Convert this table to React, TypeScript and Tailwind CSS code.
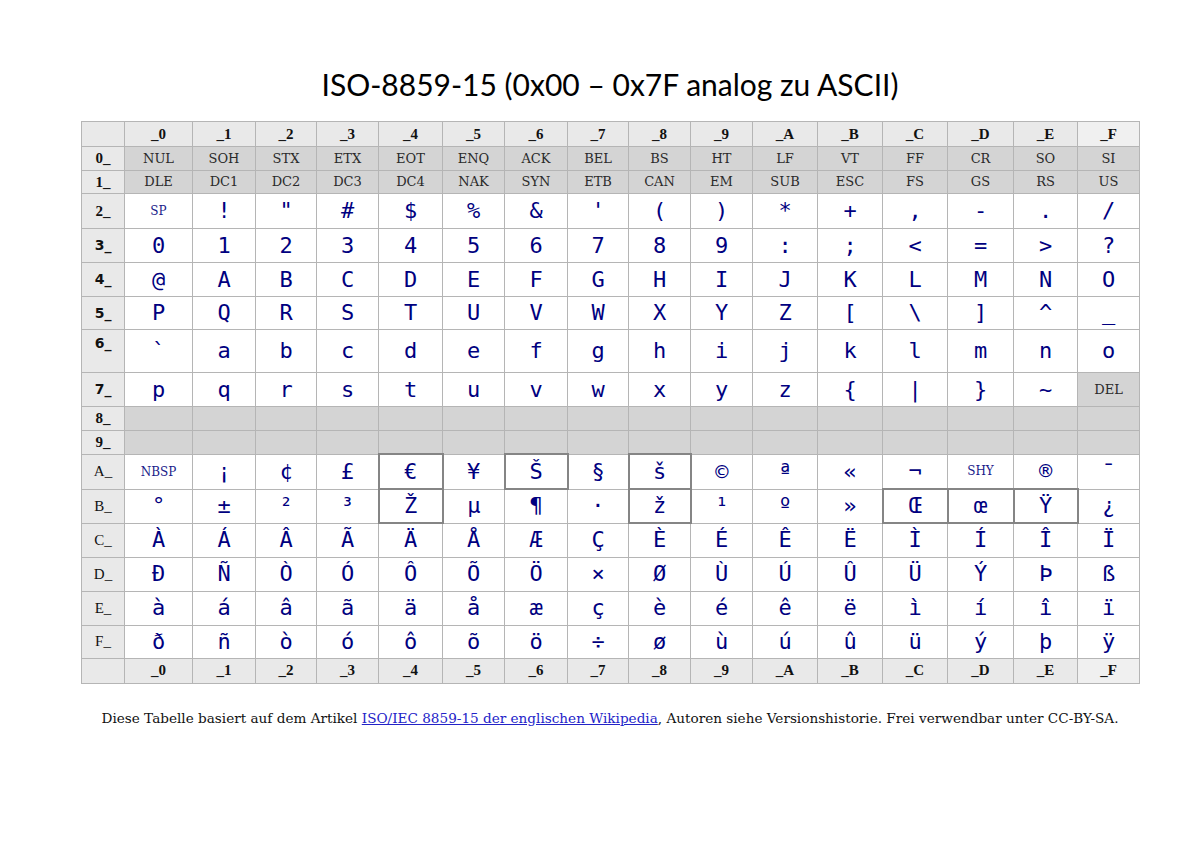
import React from "react";

const CTRL0 = ["NUL","SOH","STX","ETX","EOT","ENQ","ACK","BEL","BS","HT","LF","VT","FF","CR","SO","SI"];
const CTRL1 = ["DLE","DC1","DC2","DC3","DC4","NAK","SYN","ETB","CAN","EM","SUB","ESC","FS","GS","RS","US"];
const R2 = ["SP","!","\"","#","$","%","&","'","(",")","*","+",",","-",".","/"];
const R3 = ["0","1","2","3","4","5","6","7","8","9",":",";","<","=",">","?"];
const R4 = ["@","A","B","C","D","E","F","G","H","I","J","K","L","M","N","O"];
const R5 = ["P","Q","R","S","T","U","V","W","X","Y","Z","[","\\","]","^","_"];
const R6 = ["`","a","b","c","d","e","f","g","h","i","j","k","l","m","n","o"];
const R7 = ["p","q","r","s","t","u","v","w","x","y","z","{","|","}","~","DEL"];
const RA = ["NBSP","¡","¢","£","€","¥","Š","§","š","©","ª","«","¬","SHY","®","¯"];
const RB = ["°","±","²","³","Ž","µ","¶","·","ž","¹","º","»","Œ","œ","Ÿ","¿"];
const RC = ["À","Á","Â","Ã","Ä","Å","Æ","Ç","È","É","Ê","Ë","Ì","Í","Î","Ï"];
const RD = ["Ð","Ñ","Ò","Ó","Ô","Õ","Ö","×","Ø","Ù","Ú","Û","Ü","Ý","Þ","ß"];
const RE = ["à","á","â","ã","ä","å","æ","ç","è","é","ê","ë","ì","í","î","ï"];
const RF = ["ð","ñ","ò","ó","ô","õ","ö","÷","ø","ù","ú","û","ü","ý","þ","ÿ"];

const HEX = ["0","1","2","3","4","5","6","7","8","9","A","B","C","D","E","F"];

const THICK = new Set(["A4","A6","A8","B4","B8","BC","BD","BE"]);
const NAMES = new Set(["SP","NBSP","SHY"]);

const colClasses = [
  "w-[43px]","w-[68px]","w-[63px]","w-[61px]","w-[62px]","w-[64px]","w-[62px]","w-[63px]",
  "w-[61px]","w-[62px]","w-[62px]","w-[65px]","w-[65px]","w-[65px]","w-[66px]","w-[64px]","w-[62px]",
];

type RowDef = {
  label: string;
  h: string;
  kind: "ctrl" | "chars" | "empty";
  cells?: string[];
  labelStyle: "bold" | "sans" | "reg";
  top?: boolean;
};

const rows: RowDef[] = [
  { label: "0", h: "h-[22px]", kind: "ctrl", cells: CTRL0, labelStyle: "bold" },
  { label: "1", h: "h-[23px]", kind: "ctrl", cells: CTRL1, labelStyle: "bold" },
  { label: "2", h: "h-[35px]", kind: "chars", cells: R2, labelStyle: "bold" },
  { label: "3", h: "h-[34px]", kind: "chars", cells: R3, labelStyle: "sans" },
  { label: "4", h: "h-[34px]", kind: "chars", cells: R4, labelStyle: "sans" },
  { label: "5", h: "h-[33px]", kind: "chars", cells: R5, labelStyle: "sans" },
  { label: "6", h: "h-[43px]", kind: "chars", cells: R6, labelStyle: "sans", top: true },
  { label: "7", h: "h-[34px]", kind: "chars", cells: R7, labelStyle: "sans" },
  { label: "8", h: "h-[23px]", kind: "empty", labelStyle: "bold" },
  { label: "9", h: "h-[24px]", kind: "empty", labelStyle: "bold" },
  { label: "A", h: "h-[35px]", kind: "chars", cells: RA, labelStyle: "reg" },
  { label: "B", h: "h-[34px]", kind: "chars", cells: RB, labelStyle: "reg" },
  { label: "C", h: "h-[34px]", kind: "chars", cells: RC, labelStyle: "reg" },
  { label: "D", h: "h-[34px]", kind: "chars", cells: RD, labelStyle: "reg" },
  { label: "E", h: "h-[34px]", kind: "chars", cells: RE, labelStyle: "reg" },
  { label: "F", h: "h-[33px]", kind: "chars", cells: RF, labelStyle: "reg" },
];

const BORDER = "border border-[#b5b5b5]";
const HEAD_BG = "bg-[#e9e9e9]";
const CTRL_BG = "bg-[#d4d4d4]";

function labelClass(s: RowDef["labelStyle"]) {
  if (s === "bold") return "font-['Liberation_Serif',serif] font-bold text-[15px] text-[#111]";
  if (s === "sans") return "font-['DejaVu_Sans',sans-serif] font-semibold text-[14px] text-[#111]";
  return "font-['Liberation_Serif',serif] text-[15px] text-[#111]";
}

function HeaderRow() {
  return (
    <tr className="h-[25px]">
      <td className={`${BORDER} ${HEAD_BG}`}></td>
      {HEX.map((h, i) => (
        <td
          key={h}
          className={`${BORDER} ${i === 15 ? "bg-[#f0f0f0]" : HEAD_BG} text-center font-['Liberation_Serif',serif] font-bold text-[15px] text-[#111] p-0`}
        >
          _{h}
        </td>
      ))}
    </tr>
  );
}

export default function App() {
  return (
    <div className="w-[1200px] h-[848px] bg-white pt-[64px]">
      <div className="ml-[81px] w-[1058px] h-[40px] flex items-center justify-center font-['Lato',sans-serif] text-[30px] text-black">
        ISO-8859-15 (0x00 – 0x7F analog zu ASCII)
      </div>
      <table className="ml-[81px] mt-[17px] w-[1058px] table-fixed border-collapse">
        <colgroup>
          {colClasses.map((c, i) => (
            <col key={i} className={c} />
          ))}
        </colgroup>
        <tbody>
          <HeaderRow />
          {rows.map((r) => (
            <tr key={r.label} className={r.h}>
              <td
                className={`${BORDER} ${HEAD_BG} text-center p-0 ${r.top ? "align-top pt-[3px]" : ""} ${labelClass(r.labelStyle)}`}
              >
                {r.label}_
              </td>
              {r.kind === "empty" &&
                HEX.map((h) => <td key={h} className={`${BORDER} ${CTRL_BG}`}></td>)}
              {r.kind === "ctrl" &&
                r.cells!.map((c, i) => (
                  <td
                    key={i}
                    className={`${BORDER} ${CTRL_BG} text-center p-0 font-['DejaVu_Serif',serif] text-[13px] text-[#2a2a2a]`}
                  >
                    {c}
                  </td>
                ))}
              {r.kind === "chars" &&
                r.cells!.map((c, i) => {
                  const key = r.label + HEX[i];
                  const thick = THICK.has(key);
                  const isDel = c === "DEL";
                  const isName = NAMES.has(c);
                  let cls = "text-center p-0 ";
                  cls += thick ? "border-2 border-[#858585] " : BORDER + " ";
                  if (isDel) {
                    cls += `${CTRL_BG} font-['DejaVu_Serif',serif] text-[13px] text-[#2a2a2a]`;
                  } else if (isName) {
                    cls += "bg-white font-['DejaVu_Serif',serif] text-[12px] text-[#1a1a8a]";
                  } else {
                    cls += "bg-white font-['DejaVu_Sans_Mono',monospace] text-[22px] leading-none text-[#000080]";
                  }
                  return (
                    <td key={i} className={cls}>
                      {c}
                    </td>
                  );
                })}
            </tr>
          ))}
          <HeaderRow />
        </tbody>
      </table>
      <div className="ml-[81px] mt-[25px] w-[1058px] text-center font-['DejaVu_Serif',serif] text-[13.6px] leading-[18px] text-[#111]">
        Diese Tabelle basiert auf dem Artikel{" "}
        <span className="text-[#2323c8] underline">ISO/IEC 8859-15 der englischen Wikipedia</span>, Autoren siehe
        Versionshistorie. Frei verwendbar unter CC-BY-SA.
      </div>
    </div>
  );
}
